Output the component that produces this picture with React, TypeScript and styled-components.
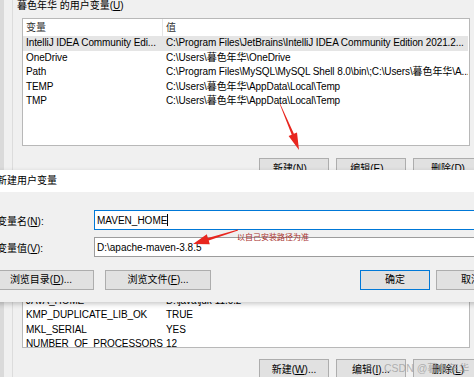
import React from "react";
import styled, { createGlobalStyle } from "styled-components";

const GlobalStyle = createGlobalStyle`
  html, body {
    margin: 0;
    padding: 0;
  }
  body {
    background: #f0f0f0;
    font-family: "Liberation Sans", "Noto Sans CJK SC", sans-serif;
  }
`;

const Screen = styled.div`
  position: relative;
  width: 474px;
  height: 377px;
  overflow: hidden;
  background: #f0f0f0;
  font-family: "Liberation Sans", "Noto Sans CJK SC", sans-serif;
  font-size: 10px;
  color: #000;
`;

const Window = styled.div`
  display: flex;
  height: 100%;
`;

const WindowEdge = styled.div`
  flex: none;
  width: 4px;
  margin-right: 8px;
  background: #dadada;
`;

const Sections = styled.div`
  flex: 1;
  display: flex;
  flex-direction: column;
`;

const GroupBox = styled.section<{ $top?: number }>`
  border-left: 1px solid #dcdcdc;
  margin-top: ${(p) => p.$top ?? 0}px;
`;

const Caption = styled.div`
  height: 12px;
  line-height: 12px;
  padding-left: 4px;
  margin-bottom: 6px;
  white-space: nowrap;
`;

const ListBox = styled.div<{ $height: number }>`
  box-sizing: border-box;
  width: 448px;
  height: ${(p) => p.$height}px;
  margin-left: 9px;
  border: 1px solid #b8b8b8;
  background: #fff;
  overflow: hidden;
  letter-spacing: -0.1px;
`;

const Row = styled.div<{ $selected?: boolean }>`
  display: grid;
  grid-template-columns: 140px 1fr;
  height: 14.5px;
  line-height: 14.5px;
  margin-right: 1px;
  background: ${(p) => (p.$selected ? "#e5e5e5" : "transparent")};
  white-space: nowrap;
`;

const HeaderRow = styled(Row)`
  height: 17px;
  line-height: 17px;
  color: #333;
`;

const Cell = styled.div<{ $divider?: boolean }>`
  padding-left: 3px;
  overflow: hidden;
  border-right: ${(p) => (p.$divider ? "1px solid #e5e5e5" : "none")};
`;

const ButtonRow = styled.div<{ $top: number }>`
  display: flex;
  gap: 7px;
  margin-top: ${(p) => p.$top}px;
  padding-left: 246px;
`;

const Button = styled.div<{ $width?: number; $default?: boolean }>`
  box-sizing: border-box;
  flex: none;
  width: ${(p) => p.$width ?? 70}px;
  height: 20px;
  line-height: 18px;
  text-align: center;
  background: #e1e1e1;
  border: 1px solid ${(p) => (p.$default ? "#0078d7" : "#adadad")};
  white-space: nowrap;
`;

const LowButton = styled(Button)`
  height: 21px;
  line-height: 20px;
`;

const Dialog = styled.div`
  position: absolute;
  top: 170px;
  left: -20px;
  width: 537px;
  height: 132px;
  display: flex;
  flex-direction: column;
  background: #f0f0f0;
  box-shadow: 0 2px 5px rgba(0, 0, 0, 0.22);
`;

const TitleBar = styled.div`
  height: 22px;
  line-height: 22px;
  padding-left: 17px;
  background: #fff;
`;

const DialogBody = styled.div`
  flex: 1;
  display: flex;
  flex-direction: column;
  gap: 7px;
  padding: 18px 11px 13px 14px;
`;

const FieldRow = styled.div`
  display: flex;
  align-items: center;
`;

const FieldLabel = styled.div`
  width: 100px;
  padding-left: 3px;
  box-sizing: border-box;
`;

const TextBox = styled.div<{ $focused?: boolean }>`
  box-sizing: border-box;
  flex: 1;
  height: 20px;
  padding-left: 2px;
  background: #fff;
  border: 1px solid ${(p) => (p.$focused ? "#0078d7" : "#9c9c9c")};
  display: flex;
  align-items: center;
`;

const Caret = styled.span`
  display: inline-block;
  width: 0;
  height: 12px;
  border-left: 1px solid #000;
`;

const DialogButtons = styled.div`
  display: flex;
  margin-top: 6px;
  margin-left: -6px;
  gap: 11px;
`;

const Spacer = styled.div`
  flex: 1;
`;

const ConfirmGroup = styled.div`
  display: flex;
  gap: 6px;
`;

const Note = styled.div`
  position: absolute;
  left: 237px;
  top: 233px;
  font-size: 8px;
  line-height: 10px;
  color: #a8302c;
  white-space: nowrap;
`;

const Marks = styled.svg`
  position: absolute;
  inset: 0;
  pointer-events: none;
`;

const Watermark = styled.div`
  position: absolute;
  left: 384px;
  top: 361px;
  font-size: 10.5px;
  line-height: 14px;
  color: rgba(150, 150, 150, 0.7);
  white-space: nowrap;
`;

type Variable = [string, string];

const userVars: Variable[] = [
  ["IntelliJ IDEA Community Edi...", "C:\\Program Files\\JetBrains\\IntelliJ IDEA Community Edition 2021.2..."],
  ["OneDrive", "C:\\Users\\暮色年华\\OneDrive"],
  ["Path", "C:\\Program Files\\MySQL\\MySQL Shell 8.0\\bin\\;C:\\Users\\暮色年华\\A..."],
  ["TEMP", "C:\\Users\\暮色年华\\AppData\\Local\\Temp"],
  ["TMP", "C:\\Users\\暮色年华\\AppData\\Local\\Temp"],
];

const systemVars: Variable[] = [
  ["CLASSPATH", ".;%JAVA_HOME%\\lib;%JAVA_HOME%\\lib\\tools.jar"],
  ["ComSpec", "C:\\WINDOWS\\system32\\cmd.exe"],
  ["DriverData", "C:\\Windows\\System32\\Drivers\\DriverData"],
  ["FPS_BROWSER_APP_PROFILE_STRING", "Internet Explorer"],
  ["FPS_BROWSER_USER_PROFILE_ST...", "Default"],
  ["JAVA_HOME", "D:\\java\\jdk-11.0.2"],
  ["KMP_DUPLICATE_LIB_OK", "TRUE"],
  ["MKL_SERIAL", "YES"],
  ["NUMBER_OF_PROCESSORS", "12"],
];

const VariableList = ({ rows, height, selected }: { rows: Variable[]; height: number; selected?: number }) => (
  <ListBox $height={height}>
    <HeaderRow>
      <Cell $divider>变量</Cell>
      <Cell>值</Cell>
    </HeaderRow>
    {rows.map(([name, value], i) => (
      <Row key={name} $selected={i === selected}>
        <Cell>{name}</Cell>
        <Cell>{value}</Cell>
      </Row>
    ))}
  </ListBox>
);

export default function App() {
  return (
    <Screen>
      <GlobalStyle />
      <Window>
        <WindowEdge />
        <Sections>
          <GroupBox>
            <Caption>
              暮色年华 的用户变量(<u>U</u>)
            </Caption>
            <VariableList rows={userVars} height={128} selected={0} />
            <ButtonRow $top={12}>
              <LowButton>新建(<u>N</u>)...</LowButton>
              <LowButton>编辑(<u>E</u>)...</LowButton>
              <LowButton>删除(<u>D</u>)</LowButton>
            </ButtonRow>
          </GroupBox>
          <GroupBox $top={6}>
            <Caption>
              系统变量(<u>S</u>)
            </Caption>
            <VariableList rows={systemVars} height={145} />
            <ButtonRow $top={11}>
              <LowButton>新建(<u>W</u>)...</LowButton>
              <LowButton>编辑(<u>I</u>)...</LowButton>
              <LowButton>删除(<u>L</u>)</LowButton>
            </ButtonRow>
          </GroupBox>
        </Sections>
      </Window>

      <Dialog>
        <TitleBar>新建用户变量</TitleBar>
        <DialogBody>
          <FieldRow>
            <FieldLabel>
              变量名(<u>N</u>):
            </FieldLabel>
            <TextBox $focused>
              MAVEN_HOME
              <Caret />
            </TextBox>
          </FieldRow>
          <FieldRow>
            <FieldLabel>
              变量值(<u>V</u>):
            </FieldLabel>
            <TextBox>D:\apache-maven-3.8.5</TextBox>
          </FieldRow>
          <DialogButtons>
            <Button $width={106}>浏览目录(<u>D</u>)...</Button>
            <Button $width={106}>浏览文件(<u>F</u>)...</Button>
            <Spacer />
            <ConfirmGroup>
              <Button $default>确定</Button>
              <Button>取消</Button>
            </ConfirmGroup>
          </DialogButtons>
        </DialogBody>
      </Dialog>

      <Note>以自己安装路径为准</Note>

      <Marks width="474" height="377" viewBox="0 0 474 377">
        <polygon
          fill="#e8261f"
          points="279.7,104.1 291.7,134.7 288.6,136 299,150 297,132.5 293.9,133.8 280.3,103.9"
        />
        <polygon
          fill="#e8261f"
          points="238,229.6 207.9,238 206.8,234.3 193,244 209.8,244.2 208.7,240.6 238,230.4"
        />
      </Marks>

      <Watermark>CSDN @暮色年华</Watermark>
    </Screen>
  );
}
